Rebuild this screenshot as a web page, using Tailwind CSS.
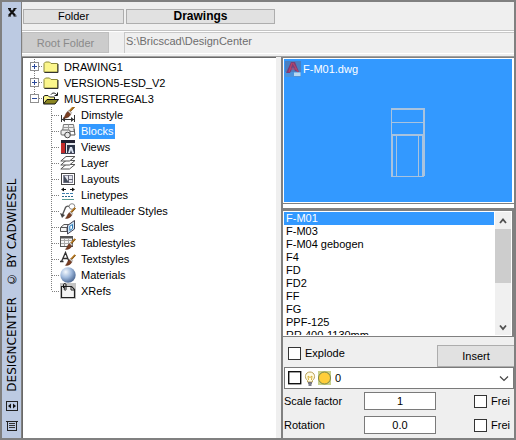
<!DOCTYPE html>
<html lang="en">
<head>
  <meta charset="utf-8">
  <meta name="viewport" content="width=device-width, initial-scale=1">
  <title>DesignCenter</title>
  <script src="https://cdn.jsdelivr.net/npm/@tailwindcss/browser@4"></script>
</head>
<body class="flex min-h-screen bg-[#efefef] border-2 border-[#808080] font-['Liberation_Sans',sans-serif] text-[11px] leading-4 text-black">

  <!-- shared icon parts -->
  <svg class="hidden">
    <defs>
      <symbol id="brush" viewBox="0 0 16 16">
        <path d="M15 1 9.500 7" stroke="#b8791f" stroke-width="2.400"/>
        <path d="M15.500 1.500 10 7.500" stroke="#6b4413" stroke-width=".8"/>
        <path d="M9 5.500 12 8.200 10.500 10 7.800 7.200z" fill="#d8d0c8" stroke="#777" stroke-width=".5"/>
        <path d="M7.800 7 10.800 10C9 13.500 6 14 3 14 5.500 12 5 9 7.800 7z" fill="#7a3f22" stroke="#54291a" stroke-width=".6"/>
      </symbol>
      <symbol id="folder" viewBox="0 0 16 16">
        <path d="M1 13V4.500L2.500 3h4L8 4.500h6.500V13z" fill="#fbf68c" stroke="#8c8a3a"/>
        <path d="M1.500 13.500h13.500V5" fill="none" stroke="#333"/>
      </symbol>
      <symbol id="plus" viewBox="0 0 13 16">
        <rect x=".5" y="3.500" width="8" height="8" fill="#fff" stroke="#8f8f8f"/>
        <path d="M2 7.500h5M4.500 5v5" stroke="#2b4a9b"/>
        <path d="M4.500 0v3M4.500 12v4M9 7.500h4" stroke="#808080" stroke-dasharray="1 1"/>
      </symbol>
      <symbol id="branch" viewBox="0 0 9 16">
        <path d="M.5 0v16M1 8.500h8" stroke="#808080" stroke-dasharray="1 1"/>
      </symbol>
    </defs>
  </svg>

  <!-- title bar -->
  <aside class="flex w-5 shrink-0 flex-col items-center justify-between border-r border-[#808080] bg-[#bccae2] pt-1 pb-1.5">
    <button type="button" aria-label="Close">
      <svg class="size-3" viewBox="0 0 12 12"><path d="M3 3 9 9.500M9 3 3 9.500" stroke="#111" stroke-width="2.200"/><path d="M2 2.500h3M7.500 2.500h3M2 10h3M7.500 10h3" stroke="#111"/></svg>
    </button>
    <div class="flex flex-col items-center gap-2">
      <h1 class="flex rotate-180 gap-3 font-['DejaVu_Sans',sans-serif] text-xs leading-4 [writing-mode:vertical-rl]"><span>DESIGNCENTER</span><span>© BY CADWIESEL</span></h1>
      <button type="button" aria-label="Auto-hide">
        <svg class="size-3" viewBox="0 0 12 12"><rect x=".5" y="1.500" width="11" height="9" fill="none" stroke="#222"/><path d="M5 3.500v5L2 6zM7 3.500v5L10 6z" fill="#111"/></svg>
      </button>
      <button type="button" aria-label="Properties">
        <svg class="size-3" viewBox="0 0 12 12"><path d="M0 1.500h12M1 10.500h10M1.500 1v10M10.500 1v10" stroke="#222"/><path d="M3 3.500h6M3 5.500h6M3 7.500h6" stroke="#333"/></svg>
      </button>
    </div>
  </aside>

  <main class="flex min-w-0 flex-1 flex-col">
    <nav class="flex gap-0.5 border-b border-[#c4c4c4] px-px pt-[7px] pb-1.5">
      <button type="button" class="h-[15px] w-[101px] border border-[#adadad] bg-[#e1e1e1] leading-[13px]">Folder</button>
      <button type="button" class="h-[15px] w-[149px] border border-[#adadad] bg-[#e1e1e1] text-xs leading-[13px] font-bold">Drawings</button>
    </nav>
    <div class="flex items-start gap-[15px] border-t border-b border-t-white border-b-white">
      <button type="button" disabled class="h-[21px] w-[87px] border border-[#bfbfbf] bg-[#cccccc] text-[#8a8a8a]">Root Folder</button>
      <input type="text" aria-label="Path" readonly value="S:\Bricscad\DesignCenter" class="h-[21px] min-w-0 flex-1 border-t border-l border-[#c8c8c8] bg-[#efefef] px-px pb-1 text-[#6d6d6d] outline-none">
    </div>

    <div class="mt-0.5 flex flex-1 gap-[5px] border-t border-[#a0a0a0]">
      <!-- drawing tree -->
      <ul class="flex-1 border-t border-l border-[#696969] bg-white pt-px">
        <li class="flex h-4 items-center pl-[7px]"><svg class="h-4 w-[13px]"><use href="#plus"/></svg><svg class="size-4"><use href="#folder"/></svg><span class="pl-[5px]">DRAWING1</span></li>
        <li class="flex h-4 items-center pl-[7px]"><svg class="h-4 w-[13px]"><use href="#plus"/></svg><svg class="size-4"><use href="#folder"/></svg><span class="pl-[5px]">VERSION5-ESD_V2</span></li>
        <li>
          <div class="flex h-4 items-center pl-[7px]">
            <svg class="h-4 w-[13px]" viewBox="0 0 13 16"><rect x=".5" y="3.500" width="8" height="8" fill="#fff" stroke="#8f8f8f"/><path d="M2 7.500h5" stroke="#2b4a9b"/><path d="M4.500 0v3M9 7.500h4" stroke="#808080" stroke-dasharray="1 1"/></svg>
            <svg class="size-4" viewBox="0 0 16 16"><path d="M.5 12.500V5.500L2 4.500h3L6.500 6h5v2" fill="#fbf68c" stroke="#222"/><path d="M.5 13 4 8.500h11.500L12 13z" fill="#8a8520" stroke="#111"/><path d="M8 3.500C9.500 1.500 12 1.500 14 4M14.500 1.500V4.500H11.500" fill="none" stroke="#111"/></svg>
            <span class="pl-[5px]">MUSTERREGAL3</span>
          </div>
          <ul>
            <li class="flex h-4 items-center pl-7"><svg class="h-4 w-[9px]"><use href="#branch"/></svg>
              <svg class="size-4" viewBox="0 0 16 16"><path d="M1.500 8v7M14.500 8v7M2 12.500h12" stroke="#333"/><path d="M5 10v5L2 12.500zM11 10v5l3-2.500z" fill="#333"/><use href="#brush" y="-2" width="16" height="15"/></svg>
              <span class="ml-[3px] px-0.5">Dimstyle</span></li>
            <li class="flex h-4 items-center pl-7"><svg class="h-4 w-[9px]"><use href="#branch"/></svg>
              <svg class="size-4" viewBox="0 0 16 16"><path d="M3.500 1.500h10l1 7h-12z" fill="#eee" stroke="#777"/><path d="M3 4.500h11M8.500 1.500v5" stroke="#999"/><rect x="1" y="7" width="9" height="5" rx="1" fill="#eee" stroke="#666"/><path d="M10 12h5l-1-6" fill="none" stroke="#555"/><circle cx="7.500" cy="12" r="2.800" fill="#e8e8e8" stroke="#444"/></svg>
              <span class="ml-[3px] bg-[#3399ff] px-0.5 leading-[15px] text-white">Blocks</span></li>
            <li class="flex h-4 items-center pl-7"><svg class="h-4 w-[9px]"><use href="#branch"/></svg>
              <svg class="size-4" viewBox="0 0 16 16"><rect x="1" y="1" width="14" height="14" fill="#e4e8ee"/><path d="M1 2.500h14" stroke="#223" stroke-width="3"/><rect x="1" y="4" width="4" height="10" fill="#c22b2b"/><path d="M5.500 3v12" stroke="#223"/><rect x="7" y="6" width="8" height="8" fill="#2b3448"/><path d="M8 14 10 8h2l2 6h-2l-1-3-1 3z" fill="#dce4f2"/><path d="M1 14.500h14" stroke="#445"/></svg>
              <span class="ml-[3px] px-0.5">Views</span></li>
            <li class="flex h-4 items-center pl-7"><svg class="h-4 w-[9px]"><use href="#branch"/></svg>
              <svg class="size-4" viewBox="0 0 16 16" fill="#fff" stroke="#555"><path d="M.8 14 6 9.500h9L9.500 14z"/><path d="M.8 10 6 5.500h9L9.500 10z"/><path d="M.8 6 6 1.500h9L9.500 6z"/></svg>
              <span class="ml-[3px] px-0.5">Layer</span></li>
            <li class="flex h-4 items-center pl-7"><svg class="h-4 w-[9px]"><use href="#branch"/></svg>
              <svg class="size-4" viewBox="0 0 16 16"><rect x="1.500" y="2.500" width="13" height="11" fill="#fff" stroke="#444"/><rect x="3.500" y="4.500" width="9" height="7" fill="#e4e7ee" stroke="#889"/><path d="M8.500 4v8M8 8.500h5" stroke="#667"/><path d="M4 4.500 9 11.500H4z" fill="#444c5c"/></svg>
              <span class="ml-[3px] px-0.5">Layouts</span></li>
            <li class="flex h-4 items-center pl-7"><svg class="h-4 w-[9px]"><use href="#branch"/></svg>
              <svg class="size-4" viewBox="0 0 16 16"><path d="M2 2.500h4M10 2.500h4" stroke="#111"/><path d="M4 .5v4L1 2.500zM12 .5v4l3-2z" fill="#111"/><path d="M2 6.500h12" stroke="#3d7fae" stroke-dasharray="3 1"/><path d="M2 9.500h12" stroke="#2a668f" stroke-dasharray="2 1"/><path d="M2 12.500h12" stroke="#5b9a94"/></svg>
              <span class="ml-[3px] px-0.5">Linetypes</span></li>
            <li class="flex h-4 items-center pl-7"><svg class="h-4 w-[9px]"><use href="#branch"/></svg>
              <svg class="size-4" viewBox="0 0 16 16"><path d="M2 13 5.500 4.500C6.500 3 8 3 9 3.500" fill="none" stroke="#555" stroke-width="1.400"/><path d="M0 10 2 15 5 12z" fill="#444"/><circle cx="12" cy="3.500" r="2.800" fill="#fff" stroke="#888"/><use href="#brush" x="3" y="4" width="13" height="13"/></svg>
              <span class="ml-[3px] px-0.5">Multileader Styles</span></li>
            <li class="flex h-4 items-center pl-7"><svg class="h-4 w-[9px]"><use href="#branch"/></svg>
              <svg class="size-4" viewBox="0 0 16 16"><path d="M.5 8.500 4 5.500h5L7 8.500V12.500H.5z" fill="#f4f4f4" stroke="#555"/><path d="M1 8.500h6" stroke="#555"/><path d="M7.500 6.500 14.500 1.500v8.500L7.500 15z" fill="#c9e2f5" stroke="#445"/><path d="M9.800 7.200 12.500 5.500v4l-2.700 2z" fill="#fff" stroke="#2878b8"/></svg>
              <span class="ml-[3px] px-0.5">Scales</span></li>
            <li class="flex h-4 items-center pl-7"><svg class="h-4 w-[9px]"><use href="#branch"/></svg>
              <svg class="size-4" viewBox="0 0 16 16"><rect x=".5" y="1.500" width="12" height="10" fill="#f6f6f6" stroke="#555"/><path d="M1 2.500h11" stroke="#555" stroke-width="2"/><path d="M1 5.500h11M1 8.500h11M4.500 3v8M8.500 3v8" stroke="#aaa"/><use href="#brush" x="3" y="3" width="13" height="13"/></svg>
              <span class="ml-[3px] px-0.5">Tablestyles</span></li>
            <li class="flex h-4 items-center pl-7"><svg class="h-4 w-[9px]"><use href="#branch"/></svg>
              <svg class="size-4" viewBox="0 0 16 16"><path d="M1.500 10.500 5.500 1.500 9 10.500M3 7.500h5M0 10.500h3.500" fill="none" stroke="#333" stroke-width="1.300"/><use href="#brush" x="3" y="3" width="13" height="13"/></svg>
              <span class="ml-[3px] px-0.5">Textstyles</span></li>
            <li class="flex h-4 items-center pl-7"><svg class="h-4 w-[9px]"><use href="#branch"/></svg>
              <svg class="size-4" viewBox="0 0 16 16"><defs><radialGradient id="ball" cx=".35" cy=".3" r=".75"><stop offset="0" stop-color="#f4f8fd"/><stop offset=".5" stop-color="#9fb9dc"/><stop offset="1" stop-color="#48648f"/></radialGradient></defs><circle cx="8" cy="8" r="7.700" fill="url(#ball)"/></svg>
              <span class="ml-[3px] px-0.5">Materials</span></li>
            <li class="flex h-4 items-center pl-7"><svg class="h-4 w-[9px]" viewBox="0 0 9 16"><path d="M.5 0v8M1 8.500h8" stroke="#808080" stroke-dasharray="1 1"/></svg>
              <svg class="size-4" viewBox="0 0 16 16"><rect width="16" height="16" fill="#c4c4c4"/><path d="M1.500 3.500h10l3 3v8h-13z" fill="#f4f4f4" stroke="#222" stroke-width="1.200"/><path d="M11 3.500V7h3.500" fill="none" stroke="#222"/><path d="M3.500 5V1.500C3.500.3 6 .3 6 1.500v5c0 1-1.700 1-1.700 0V3" fill="none" stroke="#111"/></svg>
              <span class="ml-[3px] px-0.5">XRefs</span></li>
          </ul>
        </li>
      </ul>

      <!-- preview and insert options -->
      <section class="flex w-[233px] flex-col border-t border-l-2 border-[#808080]">
        <figure class="relative flex h-[145px] items-center justify-center border border-r-2 border-white bg-[#3399ff]">
          <figcaption class="absolute top-0.5 left-px flex items-center gap-0.5 text-white">
            <svg class="size-4" viewBox="0 0 16 16"><rect width="16" height="16" fill="#4b7fc0"/><path d="M0 11h16v5H0z" fill="#4a93dc"/><path d="M1 12 6 1h4l4 10-4-1-2-4-3 6z" fill="#7a3f78"/><path d="M7 2 4 11M8 2l5 9M5 8h7" stroke="#b5456a" stroke-width="1.200"/><path d="M9 11.500h6.500v3.500H9z" fill="#b8d8f0"/></svg>
            F-M01.dwg
          </figcaption>
          <svg class="mt-6 ml-5 h-[69px] w-[34px]" viewBox="0 0 34 69" fill="none" stroke="#a9c3de"><path d="M0 1h34M0 27h34M33 0v68" stroke-width="2"/><path d="M.5 0v68M0 14.500h33M0 68.500h33M1.500 28v40M5.500 28v40M27.500 28v40M31.500 28v40"/></svg>
        </figure>
        <div class="h-1.5 border-y border-[#808080] bg-white"></div>
        <div class="flex h-[128px] border-t-2 border-r-2 border-b border-[#808080] bg-white p-px">
          <ul role="listbox" aria-label="Blocks" class="flex-1 overflow-hidden leading-[13px]">
            <li role="option" aria-selected="true" class="bg-[#3399ff] px-0.5 text-white">F-M01</li>
            <li role="option" class="px-0.5">F-M03</li>
            <li role="option" class="px-0.5">F-M04 gebogen</li>
            <li role="option" class="px-0.5">F4</li>
            <li role="option" class="px-0.5">FD</li>
            <li role="option" class="px-0.5">FD2</li>
            <li role="option" class="px-0.5">FF</li>
            <li role="option" class="px-0.5">FG</li>
            <li role="option" class="px-0.5">PPF-125</li>
            <li role="option" class="px-0.5">RR 400-1130mm</li>
          </ul>
          <div class="ml-px flex w-4 flex-col bg-[#f0f0f0]">
            <button type="button" aria-label="Scroll up" class="flex h-[17px] items-center justify-center"><svg class="h-2 w-2" viewBox="0 0 8 8"><path d="M1 6 4 2.500 7 6" fill="none" stroke="#505050" stroke-width="1.800"/></svg></button>
            <div class="h-[54px] bg-[#cdcdcd]"></div>
            <button type="button" aria-label="Scroll down" class="mt-auto flex h-[17px] items-center justify-center"><svg class="h-2 w-2" viewBox="0 0 8 8"><path d="M1 2.500 4 6 7 2.500" fill="none" stroke="#505050" stroke-width="1.800"/></svg></button>
          </div>
        </div>

        <form class="flex flex-col pl-px">
          <div class="flex items-start justify-between pt-2 pl-1">
            <label class="flex items-center gap-1"><input type="checkbox" class="size-[13px] appearance-none border border-[#333] bg-white">Explode</label>
            <button type="button" class="h-[22px] w-[77px] border border-r-0 border-[#adadad] bg-[#e1e1e1]">Insert</button>
          </div>
          <div class="relative">
            <select aria-label="Layer" class="block h-[22px] w-full appearance-none border border-[#7a7a7a] bg-white pl-[50px]"><option>0</option></select>
            <svg class="pointer-events-none absolute top-1 left-1 h-[15px] w-11" viewBox="0 0 44 15"><rect x=".7" y=".7" width="12" height="12" fill="#fff" stroke="#111" stroke-width="1.400"/><path d="M19.500 9.500C16 7 17 1 22 1s6 6 2.500 8.500V11h-5z" fill="#fffbe0" stroke="#b9a25a"/><path d="M20.500 9 20 5l2 1.500L24 5l-.5 4" fill="none" stroke="#d9b23c"/><path d="M20 12h4M20.500 14h3" stroke="#556" stroke-width="1.500"/><rect x="30" y="0" width="13" height="14" fill="#c8d08a"/><circle cx="36.500" cy="7" r="6" fill="#ffce3a" stroke="#7d8745"/></svg>
            <svg class="pointer-events-none absolute top-2 right-1 h-2 w-3" viewBox="0 0 12 8"><path d="M2 1.500 6 5.500 10 1.500" fill="none" stroke="#444" stroke-width="1.200"/></svg>
          </div>
          <div class="flex h-6 items-center">
            <label for="scale" class="w-20">Scale factor</label>
            <input id="scale" type="text" value="1" class="h-[18px] w-[72px] border border-[#7a7a7a] bg-white text-center">
            <label class="ml-auto flex items-center gap-1 pr-1"><input type="checkbox" class="size-[13px] appearance-none border border-[#333] bg-white">Frei</label>
          </div>
          <div class="flex h-6 items-center">
            <label for="rotation" class="w-20">Rotation</label>
            <input id="rotation" type="text" value="0.0" class="h-[18px] w-[72px] border border-[#7a7a7a] bg-white text-center">
            <label class="ml-auto flex items-center gap-1 pr-1"><input type="checkbox" class="size-[13px] appearance-none border border-[#333] bg-white">Frei</label>
          </div>
        </form>
      </section>
    </div>
  </main>
</body>
</html>
